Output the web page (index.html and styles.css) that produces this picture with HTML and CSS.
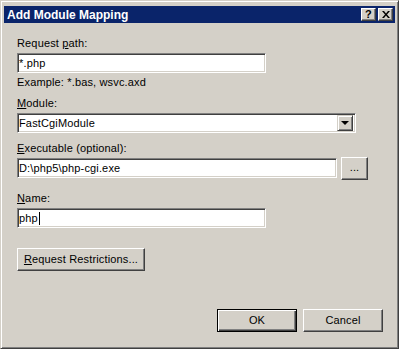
FILE: index.html
```html
<!DOCTYPE html>
<html lang="en">

<head>
  <meta charset="UTF-8">
  <title>Add Module Mapping</title>
  <link rel="stylesheet" href="styles.css">
</head>

<body>
  <div class="window">
    <div class="titleBar">
      <span class="title">Add Module Mapping</span>
      <div class="captionBtns">
        <span class="capBtn help">?</span>
        <span class="capBtn close">
          <svg width="8" height="7" viewBox="0 0 8 7">
            <path d="M0 0h2l2 2.5 2-2.5h2l-3 3.5 3 3.5h-2l-2-2.5-2 2.5h-2l3-3.5z" fill="#000"/>
          </svg>
        </span>
      </div>
    </div>

    <div class="content">
      <label class="lbl">Request <u>p</u>ath:</label>
      <div class="field short">*.php</div>
      <div class="hint">Example: *.bas, wsvc.axd</div>

      <label class="lbl module"><u>M</u>odule:</label>
      <div class="field select">
        <span class="selText">FastCgiModule</span>
        <span class="dropBtn"><span class="arrow"></span></span>
      </div>

      <label class="lbl exe"><u>E</u>xecutable (optional):</label>
      <div class="exeRow">
        <div class="field exec">D:\php5\php-cgi.exe</div>
        <span class="btn browse">...</span>
      </div>

      <label class="lbl name"><u>N</u>ame:</label>
      <div class="field short">php<span class="caret"></span></div>

      <span class="btn restrict"><u>R</u>equest Restrictions...</span>

      <div class="footer">
        <span class="btn default">OK</span>
        <span class="btn">Cancel</span>
      </div>
    </div>
  </div>
</body>

</html>
```

FILE: styles.css
```css
body {
  margin: 0;
  background-color: #d4d0c8;
  font-family: "Liberation Sans", Arial, sans-serif;
  font-size: 11px;
  letter-spacing: 0.15px;
  color: #000;
}

.window {
  width: 399px;
  height: 349px;
  box-sizing: border-box;
  display: flex;
  flex-direction: column;
  background-color: #d4d0c8;
  border: 1px solid;
  border-color: #d4d0c8 #404040 #404040 #d4d0c8;
  box-shadow: inset 1px 1px #fff, inset -1px -1px #808080;
  padding: 5px 3px 2px 3px;
}

.titleBar {
  height: 17px;
  display: flex;
  align-items: center;
  justify-content: space-between;
  padding: 0 2px 0 3px;
  background-color: #0a246a;
}

.title {
  color: #fff;
  font-weight: bold;
  font-size: 12px;
  letter-spacing: 0;
}

.captionBtns {
  display: flex;
  gap: 2px;
}

.capBtn {
  width: 15px;
  height: 13px;
  box-sizing: border-box;
  display: flex;
  align-items: center;
  justify-content: center;
  background-color: #d4d0c8;
  border: 1px solid;
  border-color: #fff #404040 #404040 #fff;
  box-shadow: inset -1px -1px #808080;
  font-weight: bold;
  font-size: 11px;
  line-height: 11px;
}

.content {
  flex: 1;
  display: flex;
  flex-direction: column;
  align-items: flex-start;
  padding: 14px 12px 14px 13px;
}

.lbl {
  display: block;
  line-height: 13px;
  margin-bottom: 3px;
}

.module { margin-top: 8px; }
.exe { margin-top: 9px; }
.name { margin-top: 12px; }

.field {
  height: 20px;
  box-sizing: border-box;
  display: flex;
  align-items: center;
  padding-left: 1px;
  background-color: #fff;
  border: 1px solid;
  border-color: #808080 #fff #fff #808080;
  box-shadow: inset 1px 1px #404040, inset -1px -1px #d4d0c8;
  line-height: 13px;
}

.short { width: 249px; }
.select { width: 339px; padding-right: 2px; }
.exec { width: 320px; }

.hint {
  line-height: 13px;
  margin-top: 3px;
}

.selText { flex: 1; }

.dropBtn {
  width: 16px;
  height: 16px;
  box-sizing: border-box;
  display: flex;
  align-items: center;
  justify-content: center;
  background-color: #d4d0c8;
  border: 1px solid;
  border-color: #d4d0c8 #404040 #404040 #d4d0c8;
  box-shadow: inset 1px 1px #fff, inset -1px -1px #808080;
}

.arrow {
  width: 0;
  height: 0;
  border-left: 4px solid transparent;
  border-right: 4px solid transparent;
  border-top: 4px solid #000;
}

.exeRow {
  display: flex;
  align-items: flex-start;
  gap: 4px;
}

.btn {
  height: 23px;
  width: 80px;
  box-sizing: border-box;
  display: flex;
  align-items: center;
  justify-content: center;
  background-color: #d4d0c8;
  border: 1px solid;
  border-color: #fff #404040 #404040 #fff;
  box-shadow: inset -1px -1px #808080;
  line-height: 13px;
}

.browse {
  width: 27px;
  margin-top: -1px;
  padding-bottom: 2px;
}

.restrict {
  width: 128px;
  margin-top: 20px;
}

.btn.default {
  border: 1px solid #000;
  box-shadow: inset 1px 1px #fff, inset -1px -1px #404040, inset -2px -2px #808080;
}

.footer {
  margin-top: auto;
  align-self: stretch;
  display: flex;
  justify-content: flex-end;
  gap: 6px;
}

.caret {
  display: inline-block;
  width: 1px;
  height: 13px;
  margin-left: 1px;
  background-color: #000;
}
```
